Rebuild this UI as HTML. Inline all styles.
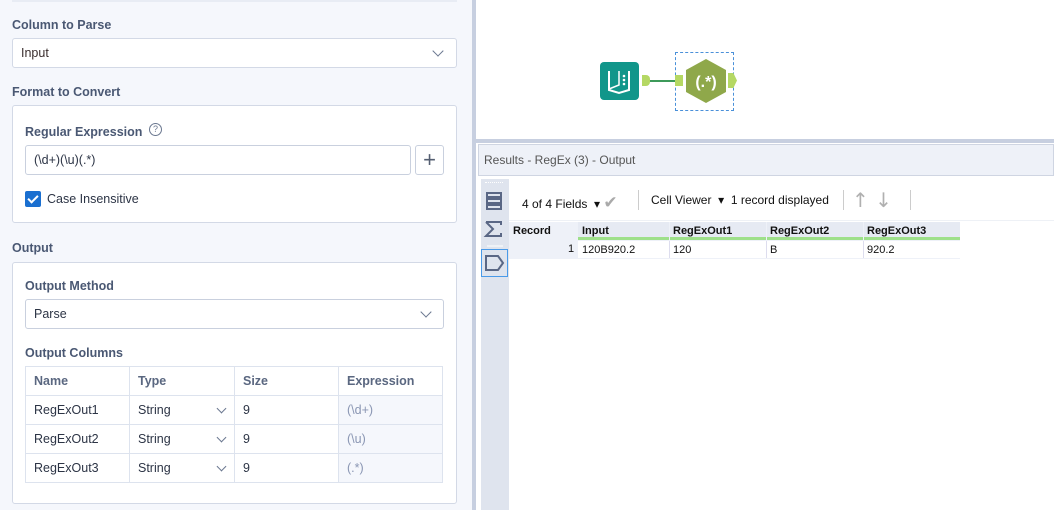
<!DOCTYPE html>
<html><head><style>
*{box-sizing:border-box;margin:0;padding:0}
body{width:1054px;height:510px;overflow:hidden;position:relative;font-family:"Liberation Sans",sans-serif;background:#fff}
.a{position:absolute}
.lbl{font-size:12.5px;color:#4a5873;font-weight:bold}
.box{background:#fff;border:1px solid #d3d9e6;border-radius:3px}
.txt{font-size:12.5px;color:#2c3445}
.chev{width:8px;height:8px;border-right:1.3px solid #6b7890;border-bottom:1.3px solid #6b7890;transform:rotate(45deg)}
table.oc{border-collapse:collapse;font-size:12.5px;color:#2c3445}
table.oc td{border:1px solid #dde3ee;height:29px;padding:0 0 0 8px}
table.oc tr{height:29px}
.g{font-family:"Liberation Sans",sans-serif;font-size:11px;color:#111}
</style></head><body>
<div class="a" style="left:0;top:0;width:472px;height:510px;background:#f5f7fc"></div>
<div class="a" style="left:12px;top:0;width:445px;height:2px;background:#e8ecf4"></div>
<div class="a lbl" style="left:12px;top:18px">Column to Parse</div>
<div class="a box" style="left:12px;top:38px;width:445px;height:30px"></div>
<div class="a txt" style="left:21px;top:46px;color:#3a2e2e">Input</div>
<div class="a chev" style="left:434px;top:47px"></div>
<div class="a lbl" style="left:12px;top:85px">Format to Convert</div>
<div class="a box" style="left:12px;top:105px;width:445px;height:118px"></div>
<div class="a lbl" style="left:25px;top:125px">Regular Expression</div>
<div class="a" style="left:149px;top:123px;width:13px;height:13px;border:1.2px solid #6b7890;border-radius:50%;font-size:9px;color:#6b7890;text-align:center;line-height:11px">?</div>
<div class="a box" style="left:25px;top:145px;width:386px;height:30px;border-color:#c9d0de"></div>
<div class="a txt" style="left:34px;top:153px">(\d+)(\u)(.*)</div>
<div class="a box" style="left:415px;top:145px;width:29px;height:30px;border-color:#c9d0de;font-size:22px;color:#555f72;text-align:center;line-height:27px">+</div>
<div class="a" style="left:25px;top:191px;width:16px;height:16px;background:#1a6fd0;border-radius:2px"></div>
<div class="a" style="left:30px;top:193px;width:6px;height:10px;border-right:2px solid #fff;border-bottom:2px solid #fff;transform:rotate(45deg)"></div>
<div class="a txt" style="left:47px;top:192px">Case Insensitive</div>
<div class="a lbl" style="left:12px;top:241px">Output</div>
<div class="a box" style="left:12px;top:262px;width:445px;height:242px"></div>
<div class="a lbl" style="left:25px;top:279px">Output Method</div>
<div class="a box" style="left:25px;top:299px;width:419px;height:30px;border-color:#c9d0de"></div>
<div class="a txt" style="left:34px;top:307px">Parse</div>
<div class="a chev" style="left:422px;top:308px"></div>
<div class="a lbl" style="left:25px;top:346px">Output Columns</div>
<table class="oc a" style="left:25px;top:366px;width:418px">
<tr style="color:#5a6780;font-weight:bold"><td style="width:104px">Name</td><td style="width:105px">Type</td><td style="width:104px">Size</td><td>Expression</td></tr>
<tr><td>RegExOut1</td><td style="position:relative">String<span class="chev a" style="left:88px;top:9px;width:7px;height:7px"></span></td><td>9</td><td style="background:#f5f7fc;color:#8a96b3">(\d+)</td></tr>
<tr><td>RegExOut2</td><td style="position:relative">String<span class="chev a" style="left:88px;top:9px;width:7px;height:7px"></span></td><td>9</td><td style="background:#f5f7fc;color:#8a96b3">(\u)</td></tr>
<tr><td>RegExOut3</td><td style="position:relative">String<span class="chev a" style="left:88px;top:9px;width:7px;height:7px"></span></td><td>9</td><td style="background:#f5f7fc;color:#8a96b3">(.*)</td></tr>
</table>
<div class="a" style="left:472px;top:0;width:4px;height:510px;background:#c7cfe0"></div>
<div class="a" style="left:476px;top:139px;width:578px;height:4px;background:#c7cfe0"></div>
<div class="a" style="left:600px;top:62px;width:39px;height:38px;background:#11968a;border-radius:4px"></div>
<svg class="a" style="left:600px;top:62px" width="39" height="38"><path d="M9 9 L9 28 L19 31 L29 28 L29 9" fill="none" stroke="#fff" stroke-width="2"/><path d="M9 27 L19 23 L19 9" fill="none" stroke="#fff" stroke-width="1.5"/><circle cx="24" cy="14" r="1.3" fill="#fff"/><circle cx="24" cy="18" r="1.3" fill="#fff"/><circle cx="24" cy="22" r="1.3" fill="#fff"/></svg>
<div class="a" style="left:642px;top:75px;width:8px;height:11px;background:#b5d864;border-radius:0 4px 4px 0"></div>
<div class="a" style="left:650px;top:80px;width:28px;height:2px;background:#3d9a5a"></div>
<div class="a" style="left:675px;top:52px;width:59px;height:59px;border:1px dashed #4a90d9"></div>
<div class="a" style="left:675px;top:75px;width:8px;height:11px;background:#b5d864"></div>
<svg class="a" style="left:684px;top:58px" width="44" height="46"><polygon points="22,1 42,12 42,34 22,45 2,34 2,12" fill="#8fa84a"/><text x="22" y="29" text-anchor="middle" font-family="Liberation Sans" font-weight="bold" font-size="16" fill="#fff">(.*)</text></svg>
<div class="a" style="left:728px;top:73px;width:9px;height:15px;background:#b5d864;clip-path:polygon(0 0,60% 0,100% 50%,60% 100%,0 100%)"></div>
<div class="a" style="left:478px;top:144px;width:576px;height:32px;background:#eef1f8;border:1px solid #cfd5e2"></div>
<div class="a" style="left:484px;top:153px;font-size:12px;color:#555">Results - RegEx (3) - Output</div>
<div class="a" style="left:481px;top:179px;width:28px;height:331px;background:#dfe4ee"></div>
<div class="a" style="left:485px;top:182px;width:18px;border-top:1px dotted #fff"></div>
<svg class="a" style="left:481px;top:188px" width="28" height="90"><g fill="none" stroke="#5a6785" stroke-width="2"><rect x="6" y="5" width="14" height="4"/><rect x="6" y="11" width="14" height="4"/><rect x="6" y="17" width="14" height="4"/><path d="M5 34 L20 34 L20 37 M5 34 L12 41 L5 48 L20 48 L20 45"/><path d="M5 68 L17 68 L22 75 L17 82 L5 82 Z"/></g><line x1="6" y1="58" x2="22" y2="58" stroke="#fff"/><rect x="0.5" y="61.5" width="26" height="27" fill="none" stroke="#4a9ae8"/></svg>
<div class="a" style="left:509px;top:220px;width:545px;height:1px;background:#eef1f6"></div>
<div class="a g" style="left:522px;top:193px;font-size:12px">4 of 4 Fields &nbsp;▾ <span style="color:#aaa;font-size:17px">✔</span></div>
<div class="a" style="left:638px;top:190px;width:1px;height:20px;background:#ccc"></div>
<div class="a g" style="left:651px;top:193px;font-size:12px">Cell Viewer &nbsp;▾ &nbsp;1 record displayed</div>
<div class="a" style="left:843px;top:190px;width:1px;height:20px;background:#ccc"></div>
<div class="a" style="left:852px;top:188px;font-size:20px;color:#b0b0b0;font-family:'DejaVu Sans',sans-serif">↑&nbsp;↓</div>
<div class="a" style="left:910px;top:190px;width:1px;height:20px;background:#ccc"></div>
<div class="a" style="left:509px;top:222px;width:451px;height:37px;background:#eef1f8"></div>
<div class="a g" style="left:513px;top:225px;font-weight:bold">Record</div>
<div class="a" style="left:578px;top:222px;width:91px;height:18px;background:#e6eaf3;border-bottom:3px solid #9ee08a"></div>
<div class="a g" style="left:582px;top:225px;font-weight:bold">Input</div>
<div class="a" style="left:670px;top:222px;width:96px;height:18px;background:#e6eaf3;border-bottom:3px solid #9ee08a"></div>
<div class="a g" style="left:673px;top:225px;font-weight:bold">RegExOut1</div>
<div class="a" style="left:767px;top:222px;width:96px;height:18px;background:#e6eaf3;border-bottom:3px solid #9ee08a"></div>
<div class="a g" style="left:770px;top:225px;font-weight:bold">RegExOut2</div>
<div class="a" style="left:864px;top:222px;width:96px;height:18px;background:#e6eaf3;border-bottom:3px solid #9ee08a"></div>
<div class="a g" style="left:867px;top:225px;font-weight:bold">RegExOut3</div>
<div class="a g" style="left:568px;top:243px">1</div>
<div class="a" style="left:578px;top:241px;width:382px;height:17px;background:#fff"></div>
<div class="a" style="left:669px;top:241px;width:1px;height:17px;background:#dde"></div>
<div class="a" style="left:766px;top:241px;width:1px;height:17px;background:#dde"></div>
<div class="a" style="left:863px;top:241px;width:1px;height:17px;background:#dde"></div>
<div class="a g" style="left:582px;top:244px">120B920.2</div>
<div class="a g" style="left:673px;top:244px">120</div>
<div class="a g" style="left:770px;top:244px">B</div>
<div class="a g" style="left:867px;top:244px">920.2</div>
</body></html>
